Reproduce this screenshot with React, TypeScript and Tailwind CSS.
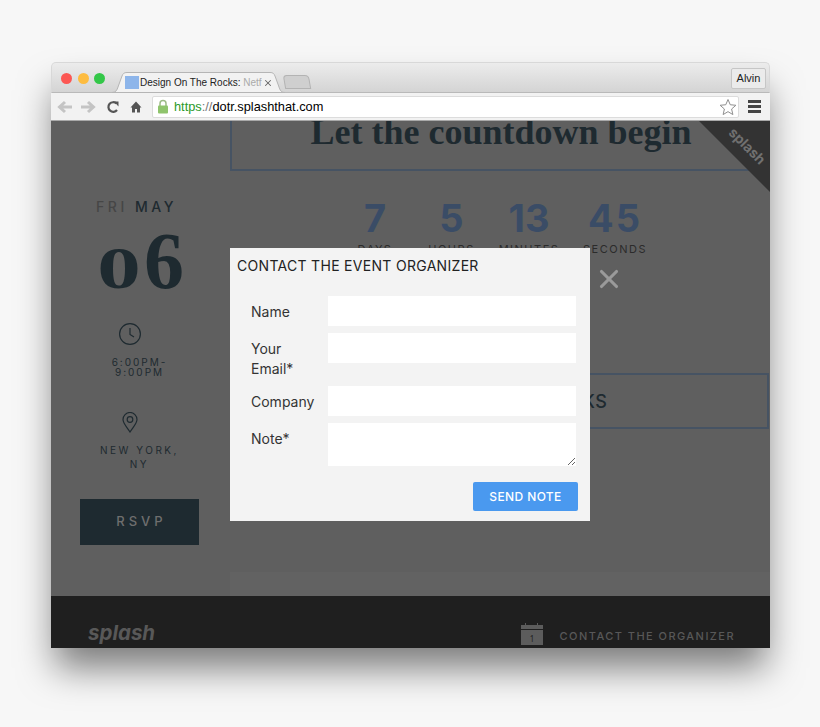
import { X } from "lucide-react";

const sans = "font-['Inter','Liberation_Sans',sans-serif]";
const serif = "font-['Liberation_Serif',serif]";
const arial = "font-['Liberation_Sans',Arial,sans-serif]";

const Countdown = () => (
  <div className={`ml-[107px] mt-[25px] flex ${sans}`}>
    <div className="w-[76px] text-center">
      <p className="text-[38px] leading-[44px] font-bold text-[#3a4c66]">7</p>
      <p className="mt-[2px] text-[11px] leading-[14px] tracking-[1.5px] text-[#2b2b2b]">DAYS</p>
    </div>
    <div className="w-[77px] text-center">
      <p className="text-[38px] leading-[44px] font-bold text-[#3a4c66]">5</p>
      <p className="mt-[2px] text-[11px] leading-[14px] tracking-[1.5px] text-[#2b2b2b]">HOURS</p>
    </div>
    <div className="w-[78px] text-center">
      <p className="text-[38px] leading-[44px] font-bold text-[#3a4c66]">13</p>
      <p className="mt-[2px] text-[11px] leading-[14px] tracking-[1.5px] text-[#2b2b2b]">MINUTES</p>
    </div>
    <div className="w-[94px] text-center">
      <p className="text-[38px] leading-[44px] font-bold text-[#3a4c66] tracking-[2px]">45</p>
      <p className="mt-[2px] text-[11px] leading-[14px] tracking-[1.5px] text-[#2b2b2b]">SECONDS</p>
    </div>
  </div>
);

const EventColumn = () => (
  <aside className={`w-[179px] pr-[2px] shrink-0 flex flex-col items-center ${sans}`}>
    <p className="mt-[77px] mr-[6px] text-[14px] leading-[18px] tracking-[3.5px] font-medium">
      <span className="text-[#464646]">FRI</span> <span className="text-[#1e2a30]">MAY</span>
    </p>
    <p className={`${serif} font-bold text-[#1e2a30] mt-[11px] ml-[2px] flex items-baseline h-[68px]`}>
      <span className="text-[60px] leading-[68px] inline-block scale-x-[1.45] w-[44px] mr-[3px] text-center">0</span>
      <span className="text-[80px] leading-[68px]">6</span>
    </p>
    <svg className="mt-[27px] mr-[20px]" width="24" height="24" viewBox="0 0 24 24" fill="none" stroke="#1e2a30" strokeWidth="1.2">
      <circle cx="12" cy="12" r="10.4" />
      <path d="M12 6v6.5l4 2.5" />
    </svg>
    <p className="mt-[11px] w-[80px] text-center text-[10px] leading-[10px] tracking-[2px] text-[#1e2a30]">
      6:00PM-
      <br />
      9:00PM
    </p>
    <svg className="mt-[35px] mr-[20px]" width="16" height="21" viewBox="0 0 16 21" fill="none" stroke="#1e2a30" strokeWidth="1.2">
      <path d="M8 20C5 15 1 11.500 1 7.500a7 7 0 0 1 14 0C15 11.500 11 15 8 20Z" />
      <circle cx="8" cy="7.500" r="2.800" />
    </svg>
    <p className="mt-[10px] w-[100px] text-center text-[10px] leading-[14px] tracking-[2.5px] text-[#1e2a30]">
      NEW YORK,
      <br />
      NY
    </p>
    <button className="mt-[28px] w-[119px] h-[46px] pl-[4px] bg-[#1e2a30] text-[#6e6e6e] text-[13px] font-medium tracking-[4px]">
      RSVP
    </button>
  </aside>
);

const Browser = () => (
  <>
    {/* barra de titulo */}
    <div className="h-[31px] flex bg-gradient-to-b from-[#ececec] to-[#d4d4d4] border-t border-x border-[#d8d8d8] border-b-[#b9b9b9] border-b rounded-t-[5px]">
      <div className="flex gap-[5.5px] pl-[9px] pt-[10px]">
        <span className="w-[11px] h-[11px] rounded-full bg-[#fc5753]" />
        <span className="w-[11px] h-[11px] rounded-full bg-[#fdbc40]" />
        <span className="w-[11px] h-[11px] rounded-full bg-[#33c748]" />
      </div>
      <div className="relative ml-[7px] mt-[9px] w-[173px] h-[21px] flex items-center pl-[13px]">
        <svg className="absolute inset-0" width="173" height="21" viewBox="0 0 173 21">
          <path d="M0 20.500C4 20.500 5 18 6 15L10 4C11 1.500 12 .5 15 .5H158C161 .5 162 1.500 163 4L167 15C168 18 169 20.500 173 20.500Z" fill="#f2f2f2" stroke="#b5b5b5" />
        </svg>
        <span className="relative w-[14px] h-[13px] bg-[#8db5ea] shrink-0" />
        <span className={`relative ml-[1px] w-[122px] shrink-0 overflow-hidden whitespace-nowrap text-[10px] text-[#222] ${arial}`}>
          Design On The Rocks: <span className="text-[#aaa]">Netf</span>
        </span>
        <X className="relative ml-[1px]" size={10} strokeWidth={2.5} color="#666" />
      </div>
      <div className="ml-[-1px] mt-[12px] w-[26px] h-[14px] rounded-t-[4px] bg-[#cfcfcf] border border-[#b3b3b3] skew-x-[10deg]" />
      <div className="ml-auto mr-[3px] mt-[5px]">
        <div className={`w-[35px] h-[21px] rounded-[2px] border border-[#c6c6c6] bg-[#ebebeb] text-center text-[11px] leading-[19px] text-[#222] ${arial}`}>
          Alvin
        </div>
      </div>
    </div>

    {/* barra de direccion */}
    <div className="h-[28px] flex items-center bg-[#f2f2f2] border-b border-[#a9a9a9]">
      <svg className="ml-[6px]" width="90" height="16" viewBox="0 0 90 16">
        <path d="M2 8h13M8 3 2.500 8 8 13" fill="none" stroke="#c4c4c4" strokeWidth="3" />
        <path d="M24 8h13M31 3l5.500 5L31 13" fill="none" stroke="#c4c4c4" strokeWidth="3" />
        <path d="M59.500 4.500A4.800 4.800 0 1 0 60 11" fill="none" stroke="#555" strokeWidth="2.200" />
        <path d="M57 2.500h4.500V7.500Z" fill="#555" />
        <path d="M79 2.500 73.500 8.500H75V13.500H78V10H80V13.500H83V8.500H84.500Z" fill="#555" />
      </svg>
      <div className="ml-[5px] w-[587px] h-[22px] flex items-center rounded-[2px] bg-white border border-[#dcdcdc]">
        <svg className="ml-[4px]" width="12" height="15" viewBox="0 0 12 15">
          <path d="M3 7V4.500a3 3 0 0 1 6 0V7" fill="none" stroke="#9dbb87" strokeWidth="1.500" />
          <rect x="1" y="6.500" width="10" height="8" rx="1" fill="#8fc46c" />
        </svg>
        <span className={`ml-[5px] text-[12.8px] text-black ${arial}`}>
          <span className="text-[#2a9a2a]">https</span>
          <span className="text-[#777]">://</span>dotr.splashthat.com
        </span>
        <svg className="ml-auto mr-[1px]" width="18" height="18" viewBox="0 0 24 24" fill="#fff" stroke="#8c8c8c" strokeWidth="1.300">
          <path d="M12 2l3 7 7.500.7-5.700 5 1.700 7.400L12 18.200l-6.500 3.900 1.700-7.400-5.700-5L9 9Z" />
        </svg>
      </div>
      <div className="ml-[9px] flex flex-col gap-[2px]">
        <span className="w-[13px] h-[3px] bg-[#444]" />
        <span className="w-[13px] h-[3px] bg-[#444]" />
        <span className="w-[13px] h-[3px] bg-[#444]" />
      </div>
    </div>
  </>
);

const ContactModal = () => (
  <div className={`absolute left-[179px] top-[127px] w-[360px] h-[273px] bg-[#f3f3f3] pl-[7px] pr-[12px] pt-[9px] ${sans}`}>
    <h2 className="text-[14px] leading-[18px] tracking-[.3px] text-[#222]">CONTACT THE EVENT ORGANIZER</h2>
    <form className="mt-[21px] flex flex-col gap-[7px] pl-[14px] pr-[2px] text-[14px] leading-[20px] text-[#333]">
      <label className="flex">
        <span className="w-[77px] pt-[6px]">Name</span>
        <input className="w-[248px] h-[30px] bg-white outline-none" />
      </label>
      <label className="flex">
        <span className="w-[77px] pt-[6px]">
          Your
          <br />
          Email*
        </span>
        <input className="w-[248px] h-[30px] bg-white outline-none" />
      </label>
      <label className="flex">
        <span className="w-[77px] pt-[6px]">Company</span>
        <input className="w-[248px] h-[30px] bg-white outline-none" />
      </label>
      <label className="flex">
        <span className="w-[77px] pt-[6px]">Note*</span>
        <textarea className="block w-[248px] h-[43px] bg-white outline-none" />
      </label>
    </form>
    <div className="mt-[16px] flex justify-end">
      <button className="w-[105px] h-[29px] rounded-[2px] bg-[#4a99ef] text-white text-[12px] font-medium tracking-[.4px]">
        SEND NOTE
      </button>
    </div>
  </div>
);

const Footer = () => (
  <footer className="h-[52px] shrink-0 flex items-start bg-[#1f1f1f] text-[#585858]">
    <span className={`ml-[37px] mt-[24px] text-[20.5px] leading-[26px] font-bold italic ${sans}`}>splash</span>
    <svg className="ml-auto mt-[26px]" width="22" height="23" viewBox="0 0 22 23">
      <path d="M0 3h4V1h1v2h11V1h1v2h5v4H0Z" fill="#5c5c5c" />
      <path d="M0 8h22v15H0Z" fill="#5c5c5c" />
      <text x="11" y="19.500" textAnchor="middle" fontSize="8" fill="#1f1f1f">1</text>
    </svg>
    <span className={`ml-[17px] mr-[35px] mt-[33px] text-[11px] leading-[14px] tracking-[1.45px] font-medium ${sans}`}>
      CONTACT THE ORGANIZER
    </span>
  </footer>
);

export default function App() {
  return (
    <div className="h-[727px] w-[820px] overflow-hidden bg-[#f7f7f7] pl-[51px] pt-[62px]">
      <div className="w-[719px] h-[586px] flex flex-col rounded-[5px] shadow-[0_24px_36px_-4px_rgba(0,0,0,.5)]">
        <Browser />
        <div className="relative flex-1 min-h-0 flex flex-col overflow-hidden bg-[#5f5f5f]">
          <div className="flex flex-1 min-h-0">
            <EventColumn />
            <main className="flex-1 min-w-0 flex flex-col">
              <div className={`h-[50px] border-l-2 border-b-2 border-[#465363] text-center ${serif}`}>
                <h1 className="text-[36px] leading-[22px] font-bold text-[#1e2a30]">Let the countdown begin</h1>
              </div>
              <Countdown />
              <div className={`mt-[117px] h-[56px] mr-[1px] border-2 border-[#465363] text-center text-[18px] leading-[54px] tracking-[.4px] font-medium text-[#1e2a30] ${sans}`}>
                DESIGN ON THE ROCKS
              </div>
              <div className="mt-auto h-[24px] bg-[#626262]" />
            </main>
          </div>
          <Footer />

          {/* cinta splash */}
          <div className="absolute right-0 top-0 w-[71px] h-[71px] bg-[#333] [clip-path:polygon(0_0,100%_0,100%_100%)]" />
          <span className={`absolute right-0 top-[14px] rotate-45 text-[14px] font-bold text-[#707070] ${sans}`}>splash</span>

          <X className="absolute left-[543px] top-[143px]" size={30} strokeWidth={2.5} color="#9a9a9a" />
          <ContactModal />
        </div>
      </div>
    </div>
  );
}
